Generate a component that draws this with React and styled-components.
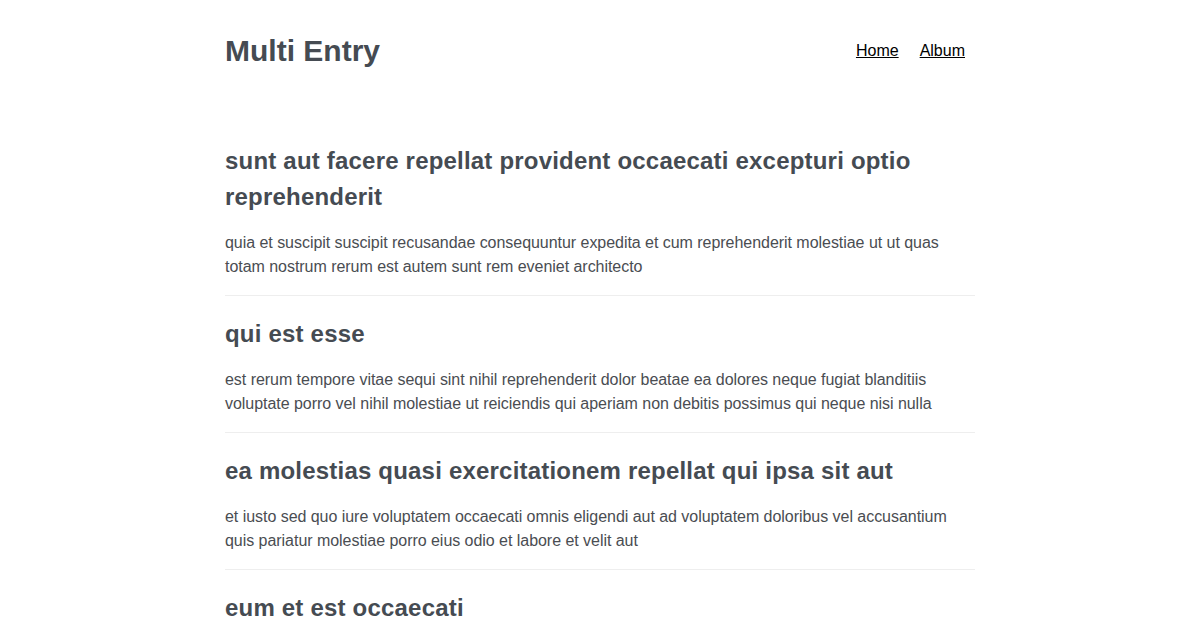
import React from 'react';
import styled, {createGlobalStyle} from 'styled-components';

const GlobalStyle = createGlobalStyle`
  html, body {
    margin: 0;
    padding: 0;
    background: #ffffff;
  }
  body {
    font-family: "Liberation Sans", Arial, sans-serif;
    color: #454b52;
  }
`;

const Page = styled.div`
  width: 750px;
  margin: 0 auto;
`;

const Header = styled.header`
  display: flex;
  align-items: center;
  justify-content: space-between;
  padding: 31px 0 29px;
`;

const SiteTitle = styled.h1`
  margin: 0;
  font-size: 30px;
  line-height: 40px;
  font-weight: 700;
  color: #454b52;
`;

const Nav = styled.nav`
  display: flex;
  gap: 1px;
`;

const NavLink = styled.a`
  padding: 0 10px;
  font-size: 16px;
  line-height: 24px;
  color: #000000;
  text-decoration: underline;
  cursor: pointer;
`;

const PostList = styled.main`
  padding-top: 23px;
`;

const Post = styled.article`
  padding-bottom: 16px;
  border-bottom: 1px solid #eeeeee;
`;

const PostTitle = styled.h2`
  margin: 20px 0 16px;
  font-size: 24px;
  line-height: 36px;
  font-weight: 700;
  letter-spacing: 0.2px;
  color: #454b52;
`;

const PostBody = styled.p`
  margin: 0;
  font-size: 16px;
  line-height: 24px;
  letter-spacing: -0.04px;
  color: #4a4d52;
`;

const posts = [
    {
        title: 'sunt aut facere repellat provident occaecati excepturi optio reprehenderit',
        body: 'quia et suscipit suscipit recusandae consequuntur expedita et cum reprehenderit molestiae ut ut quas totam nostrum rerum est autem sunt rem eveniet architecto'
    },
    {
        title: 'qui est esse',
        body: 'est rerum tempore vitae sequi sint nihil reprehenderit dolor beatae ea dolores neque fugiat blanditiis voluptate porro vel nihil molestiae ut reiciendis qui aperiam non debitis possimus qui neque nisi nulla'
    },
    {
        title: 'ea molestias quasi exercitationem repellat qui ipsa sit aut',
        body: 'et iusto sed quo iure voluptatem occaecati omnis eligendi aut ad voluptatem doloribus vel accusantium quis pariatur molestiae porro eius odio et labore et velit aut'
    },
    {
        title: 'eum et est occaecati',
        body: 'ullam et saepe reiciendis voluptatem adipisci sit amet autem assumenda provident rerum culpa quis hic commodi nesciunt rem tenetur doloremque ipsam iure quis sunt voluptatem rerum illo velit'
    }
];

const App = () => {
    return (
        <Page>
            <GlobalStyle/>
            <Header>
                <SiteTitle>Multi Entry</SiteTitle>
                <Nav>
                    <NavLink href="#">Home</NavLink>
                    <NavLink href="#">Album</NavLink>
                </Nav>
            </Header>
            <PostList>
                {posts.map(post => (
                    <Post key={post.title}>
                        <PostTitle>{post.title}</PostTitle>
                        <PostBody>{post.body}</PostBody>
                    </Post>
                ))}
            </PostList>
        </Page>
    );
};

export default App;
